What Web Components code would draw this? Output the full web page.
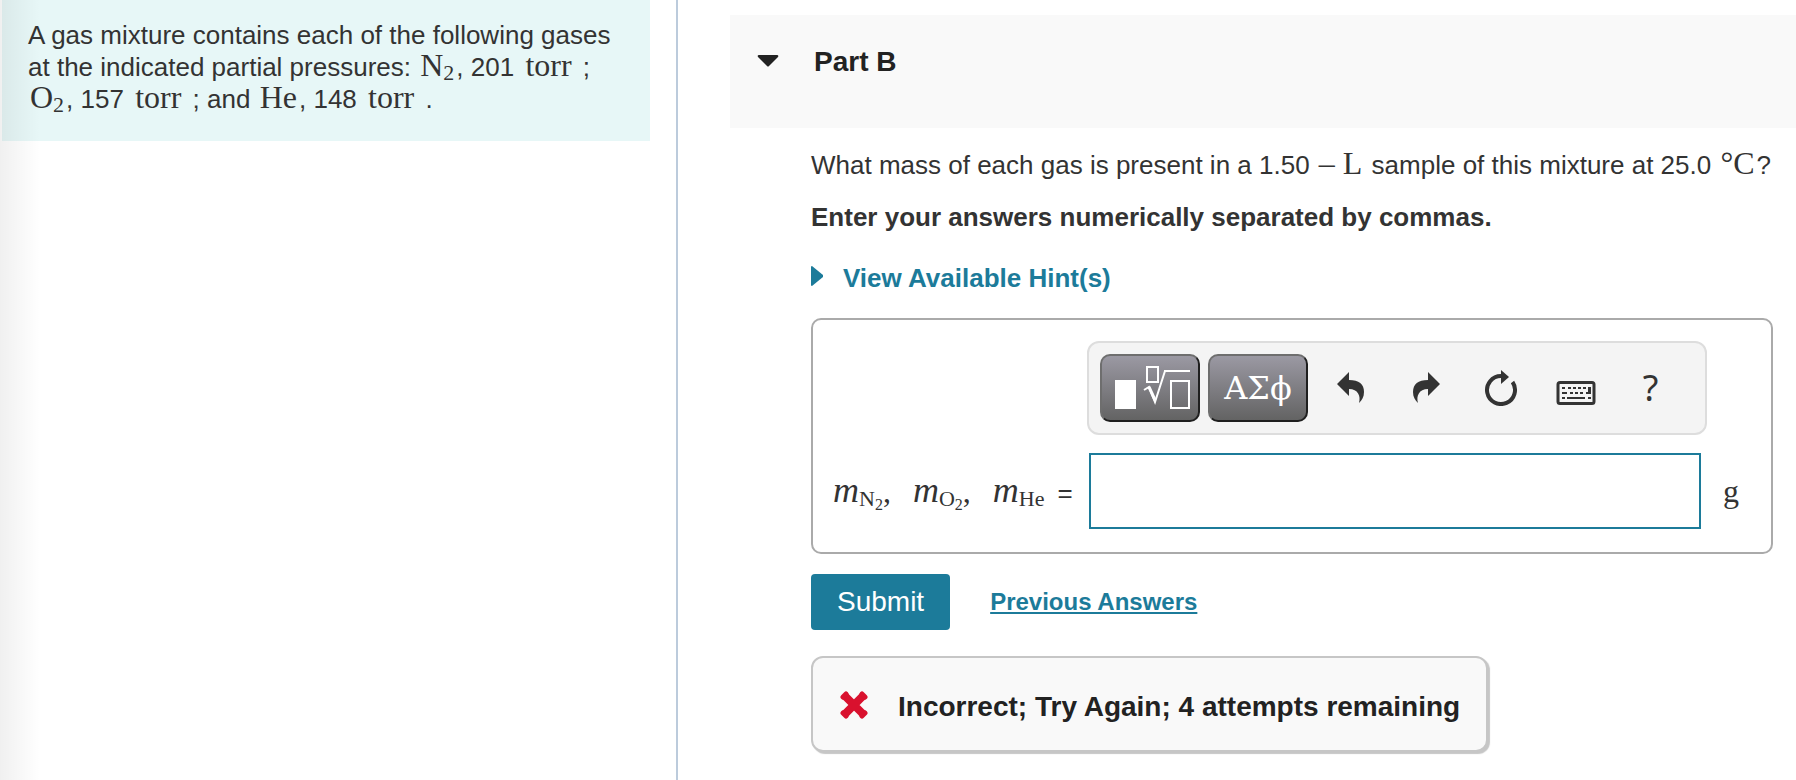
<!DOCTYPE html>
<html lang="en">
<head>
<meta charset="utf-8">
<title>Part B</title>
<style>
    body {
        margin: 0;
        background: #fff;
        color: #333;
        font: 26px/32px "Liberation Sans", Arial, sans-serif;
    }
</style>
</head>
<body>
<problem-page>
    <problem-intro slot="intro">
        A gas mixture contains each of the following gases at the indicated partial pressures:
        <chem-text>N<sub>2</sub></chem-text>, 201 <chem-text unit>torr</chem-text> ;
        <chem-text>O<sub>2</sub></chem-text>, 157 <chem-text unit>torr</chem-text> ; and
        <chem-text>He</chem-text>, 148 <chem-text unit>torr</chem-text> .
    </problem-intro>
    <part-header slot="header">Part B</part-header>
    <part-question>
        <span>What mass of each gas is present in a 1.50 <chem-text>– L</chem-text> sample of this mixture at 25.0 <chem-text>°C</chem-text>?</span>
        <strong slot="note">Enter your answers numerically separated by commas.</strong>
    </part-question>
    <hint-toggle>View Available Hint(s)</hint-toggle>
    <answer-box></answer-box>
    <submit-row></submit-row>
    <feedback-box>Incorrect; Try Again; 4 attempts remaining</feedback-box>
</problem-page>

<script>
class ProblemPage extends HTMLElement {
    constructor() {
        super();
        this.attachShadow({ mode: 'open' });
        this.shadowRoot.innerHTML = `
        <style>
        :host {
            display: grid;
            grid-template-columns: 678px 1fr;
            min-height: 100vh;
        }
        aside {
            box-sizing: border-box;
            position: relative;
            border-right: 2px solid #bccbdc;
            padding: 0 26px 0 2px;
        }
        /* soft shade along the window edge */
        aside::after {
            content: "";
            position: absolute;
            top: 0;
            bottom: 0;
            left: 0;
            width: 40px;
            background: linear-gradient(to right, rgba(0,0,0,.06), rgba(0,0,0,0));
            pointer-events: none;
        }
        main {
            padding: 15px 0 0 52px;
        }
        .content {
            padding: 21px 23px 0 81px;
        }
        </style>
        <aside><slot name="intro"></slot></aside>
        <main>
            <slot name="header"></slot>
            <div class="content"><slot></slot></div>
        </main>
        `;
    }
}

class ProblemIntro extends HTMLElement {
    constructor() {
        super();
        this.attachShadow({ mode: 'open' });
        this.shadowRoot.innerHTML = `
        <style>
        :host {
            display: block;
            background: #e7f7f7;
            padding: 19px 26px 26px;
        }
        </style>
        <slot></slot>
        `;
    }
}

class ChemText extends HTMLElement {
    constructor() {
        super();
        this.attachShadow({ mode: 'open' });
        this.shadowRoot.innerHTML = `
        <style>
        :host {
            margin: 0 2px;
            font-family: "Liberation Serif", "Times New Roman", serif;
            font-size: 32px;
            line-height: 1px;
        }
        :host([unit]) {
            margin: 0 4px;
        }
        ::slotted(sub) {
            font-size: 22px;
            line-height: 1px;
            vertical-align: -4px;
        }
        </style>
        <slot></slot>`.trim();
    }
}

class PartHeader extends HTMLElement {
    constructor() {
        super();
        this.attachShadow({ mode: 'open' });
        this.shadowRoot.innerHTML = `
        <style>
        :host {
            display: flex;
            align-items: flex-start;
            gap: 34px;
            background: #f9f9f9;
            color: #222;
            padding: 31px 26px 50px;
        }
        button {
            display: flex;
            align-items: center;
            height: 32px;
            padding: 0 0 2px;
            border: 0;
            background: none;
            color: inherit;
        }
        h2 {
            margin: 0;
            font-size: 28px;
            line-height: 32px;
        }
        </style>
        <button type="button" aria-label="Collapse part">
            <svg width="24" height="12" viewBox="0 0 24 12"><path d="M3 0H21Q23 0 22 2L13 11Q12 12 11 11L2 2Q1 0 3 0Z" fill="currentColor"/></svg>
        </button>
        <h2><slot></slot></h2>
        `;
    }
}

class PartQuestion extends HTMLElement {
    constructor() {
        super();
        this.attachShadow({ mode: 'open' });
        this.shadowRoot.innerHTML = `
        <style>
        :host {
            display: block;
            margin-right: -12px;
        }
        p {
            margin: 0 0 20px;
        }
        </style>
        <p><slot></slot></p>
        <p><slot name="note"></slot></p>
        `;
    }
}

class HintToggle extends HTMLElement {
    constructor() {
        super();
        this.attachShadow({ mode: 'open' });
        this.shadowRoot.innerHTML = `
        <style>
        :host {
            display: block;
            padding: 9px 0 24px;
        }
        button {
            display: flex;
            align-items: center;
            gap: 20px;
            padding: 0;
            border: 0;
            background: none;
            color: #1c7b9a;
            font: inherit;
            font-weight: bold;
        }
        svg {
            margin-bottom: 5px;
        }
        </style>
        <button type="button">
            <svg width="12" height="20" viewBox="0 0 12 20"><path d="M0 1Q0 0 1 0L12 9V11L1 20Q0 20 0 19Z" fill="currentColor"/></svg>
            <slot></slot>
        </button>
        `;
    }
}

class MathToolbar extends HTMLElement {
    constructor() {
        super();
        this.attachShadow({ mode: 'open' });
        this.tools = [
            {
                label: "Undo",
                icon: `<svg width="28" height="32" viewBox="0 0 28 32"><path fill="currentColor" d="M0 12L12 0V8C22 8 27 12 27 20C27 25 25 28 22 31C24 24 21 17 12 17V24Z"/></svg>`
            },
            {
                label: "Redo",
                icon: `<svg width="28" height="32" viewBox="0 0 28 32"><path fill="currentColor" d="M28 12L16 0V8C6 8 1 12 1 20C1 25 3 28 6 31C4 24 7 17 16 17V24Z"/></svg>`
            },
            {
                label: "Reset",
                icon: `<svg width="34" height="36" viewBox="0 0 34 36"><path fill="none" stroke="currentColor" stroke-width="4" d="M17 6A14 14 0 1 0 28.500 12"/><path fill="currentColor" d="M17 0L25 7L17 14Z"/></svg>`
            },
            {
                label: "Keyboard shortcuts",
                icon: `<svg class="low" width="40" height="24" viewBox="0 0 40 24"><rect x="2" y="1.500" width="36" height="21" rx="2" fill="none" stroke="currentColor" stroke-width="3"/><path fill="currentColor" d="M6 6h3v2h-3zM12 6h3v2h-3zM17 6h3v2h-3zM22 6h3v2h-3zM27 6h3v2h-3zM6 11h5v2h-5zM14 11h3v2h-3zM19 11h3v2h-3zM24 11h3v2h-3zM32 6h3v7h-5v-2h2zM6 16h3v2h-3zM11 16h18v2h-18zM32 16h3v2h-3z"/></svg>`
            },
            {
                label: "Help",
                icon: `<span class="help">?</span>`
            },
        ];
    }
    connectedCallback() {
        this.shadowRoot.innerHTML = `
        <style>
        :host {
            display: flex;
            align-items: center;
            gap: 8px;
            padding: 11px;
            border: 2px solid #ddd;
            border-radius: 12px;
            background: #f4f4f4;
        }
        button {
            display: flex;
            align-items: center;
            justify-content: center;
            height: 68px;
            padding: 0;
        }
        .key {
            box-sizing: border-box;
            width: 100px;
            border: 2px solid;
            border-color: #6e6e6e #1f1f1f #1f1f1f #6e6e6e;
            border-radius: 10px;
            background: linear-gradient(#9b99a3, #636363);
            color: #fff;
            font: 32px/64px "DejaVu Serif", serif;
        }
        .tools {
            display: flex;
            margin-left: -3px;
        }
        .tool {
            width: 75px;
            border: 0;
            background: none;
            color: #333;
        }
        .low {
            margin-top: 10px;
        }
        .help {
            font: 36px/40px "Noto Sans", sans-serif;
        }
        </style>
        <button type="button" class="key" aria-label="Templates">
            <svg width="96" height="64" viewBox="2 2 96 64" fill="none" stroke="#fff" stroke-width="2">
                <rect x="15" y="26" width="21" height="29" fill="#fff" stroke="none"/>
                <rect x="47" y="13" width="11" height="15"/>
                <path d="M65 17L55 48L49 33L44 36" stroke-width="2"/>
                <path d="M49 33L55 46" stroke-width="3"/>
                <path d="M64 17H90"/>
                <rect x="71" y="27" width="18" height="27"/>
            </svg>
        </button>
        <button type="button" class="key" aria-label="Symbols">ΑΣϕ</button>
        <div class="tools">
            ${this.tools.map(tool => `
                <button type="button" class="tool" aria-label="${tool.label}">${tool.icon}</button>
            `).join('')}
        </div>
        `;
    }
}

class AnswerBox extends HTMLElement {
    constructor() {
        super();
        this.attachShadow({ mode: 'open' });
        this.shadowRoot.innerHTML = `
        <style>
        :host {
            display: grid;
            grid-template-columns: 254px 1fr 64px;
            row-gap: 18px;
            align-items: center;
            padding: 21px 0 23px 20px;
            border: 2px solid #aaa;
            border-radius: 10px;
        }
        math-toolbar {
            grid-column: 2;
        }
        label {
            grid-column: 1;
            display: flex;
            align-items: baseline;
            gap: 22px;
            font-family: "Liberation Serif", serif;
            font-size: 32px;
        }
        label i {
            font-size: 36px;
        }
        label b {
            margin-left: -9px;
            font: 26px "Liberation Sans", sans-serif;
        }
        sub {
            font-size: 22px;
            line-height: 1px;
            vertical-align: -4px;
        }
        sub sub {
            font-size: 16px;
        }
        input {
            box-sizing: border-box;
            height: 76px;
            margin: 0 6px 0 2px;
            padding: 0 12px;
            border: 2px solid #1c7b9a;
            font: inherit;
            min-width: 0;
        }
        .unit {
            padding-left: 16px;
            font-family: "Liberation Serif", serif;
            font-size: 32px;
        }
        </style>
        <math-toolbar></math-toolbar>
        <label for="mass">
            <span><i>m</i><sub>N<sub>2</sub></sub>,</span>
            <span><i>m</i><sub>O<sub>2</sub></sub>,</span>
            <span><i>m</i><sub>He</sub></span>
            <b>=</b>
        </label>
        <input id="mass" type="text">
        <span class="unit">g</span>
        `;
    }
}

class SubmitRow extends HTMLElement {
    constructor() {
        super();
        this.attachShadow({ mode: 'open' });
        this.shadowRoot.innerHTML = `
        <style>
        :host {
            display: flex;
            align-items: center;
            gap: 40px;
            margin: 20px 0 26px;
        }
        button {
            height: 56px;
            padding: 0 26px;
            border: 0;
            border-radius: 4px;
            background: #1c7b9a;
            color: #fff;
            font: inherit;
            font-size: 28px;
        }
        a {
            color: #1c7b9a;
            font-size: 24px;
            font-weight: bold;
        }
        </style>
        <button type="submit">Submit</button>
        <a href="#previous">Previous Answers</a>
        `;
    }
}

class FeedbackBox extends HTMLElement {
    constructor() {
        super();
        this.attachShadow({ mode: 'open' });
        this.shadowRoot.innerHTML = `
        <style>
        :host {
            display: flex;
            width: fit-content;
            align-items: center;
            gap: 30px;
            padding: 33px 26px 27px 27px;
            border: 2px solid #c6c6c6;
            border-radius: 12px;
            background: #f9f9f9;
            box-shadow: 2px 2px 1px #c6c6c6;
            color: #222;
            font-size: 28px;
            font-weight: bold;
        }
        svg {
            margin-bottom: 4px;
        }
        </style>
        <svg width="28" height="28" viewBox="0 0 28 28"><path d="M7 7L21 21M21 7L7 21" stroke="#d9112e" stroke-width="8" stroke-linecap="square"/><path d="M3 6L6 3M22 3L25 6M3 22L6 25M22 25L25 22" stroke="#d9112e" stroke-width="5" stroke-linecap="round"/></svg>
        <slot></slot>
        `;
    }
}

customElements.define('problem-page', ProblemPage);
customElements.define('problem-intro', ProblemIntro);
customElements.define('chem-text', ChemText);
customElements.define('part-header', PartHeader);
customElements.define('part-question', PartQuestion);
customElements.define('hint-toggle', HintToggle);
customElements.define('math-toolbar', MathToolbar);
customElements.define('answer-box', AnswerBox);
customElements.define('submit-row', SubmitRow);
customElements.define('feedback-box', FeedbackBox);
</script>
</body>
</html>
